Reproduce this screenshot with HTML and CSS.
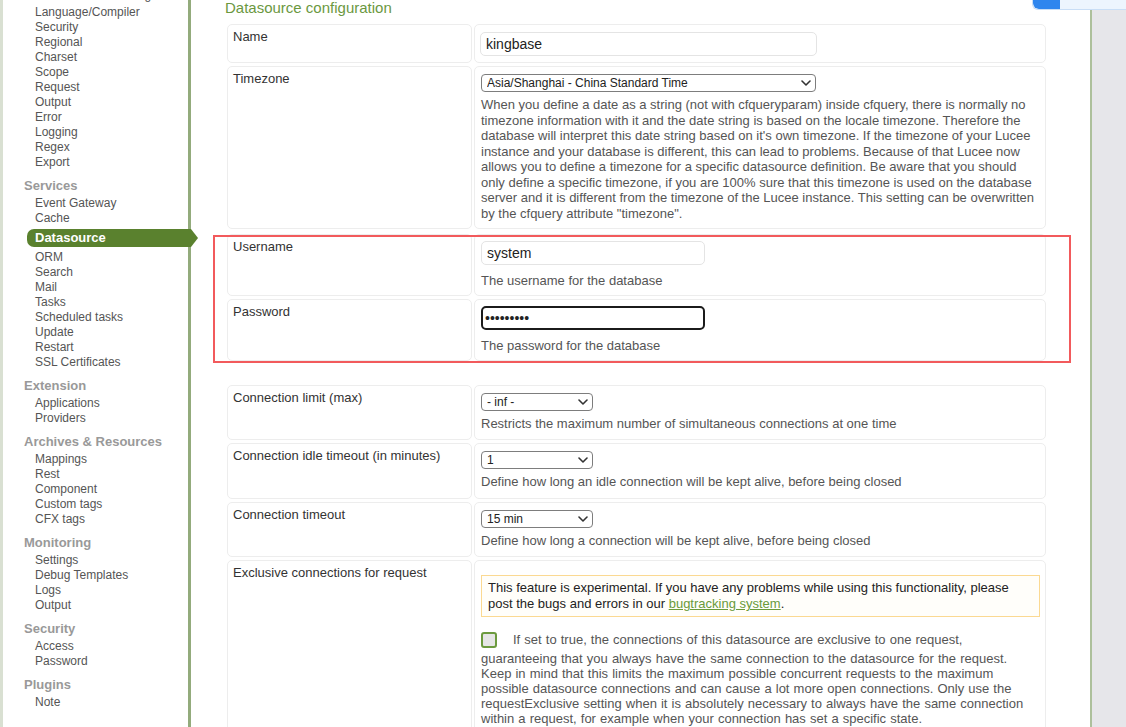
FILE: index.html
```html
<!DOCTYPE html>
<html lang="en">
<head>
<meta charset="utf-8">
<title>Datasource configuration</title>
<link rel="stylesheet" href="styles.css">
</head>
<body>
<div class="page">
  <aside class="sidebar">
    <ul class="nav">
      <li class="item item-cut">Performance/Caching</li>
      <li class="item">Language/Compiler</li>
      <li class="item">Security</li>
      <li class="item">Regional</li>
      <li class="item">Charset</li>
      <li class="item">Scope</li>
      <li class="item">Request</li>
      <li class="item">Output</li>
      <li class="item">Error</li>
      <li class="item">Logging</li>
      <li class="item">Regex</li>
      <li class="item">Export</li>
      <li class="heading">Services</li>
      <li class="item">Event Gateway</li>
      <li class="item">Cache</li>
      <li class="item active">Datasource</li>
      <li class="item">ORM</li>
      <li class="item">Search</li>
      <li class="item">Mail</li>
      <li class="item">Tasks</li>
      <li class="item">Scheduled tasks</li>
      <li class="item">Update</li>
      <li class="item">Restart</li>
      <li class="item">SSL Certificates</li>
      <li class="heading">Extension</li>
      <li class="item">Applications</li>
      <li class="item">Providers</li>
      <li class="heading">Archives &amp; Resources</li>
      <li class="item">Mappings</li>
      <li class="item">Rest</li>
      <li class="item">Component</li>
      <li class="item">Custom tags</li>
      <li class="item">CFX tags</li>
      <li class="heading">Monitoring</li>
      <li class="item">Settings</li>
      <li class="item">Debug Templates</li>
      <li class="item">Logs</li>
      <li class="item">Output</li>
      <li class="heading">Security</li>
      <li class="item">Access</li>
      <li class="item">Password</li>
      <li class="heading">Plugins</li>
      <li class="item">Note</li>
    </ul>
  </aside>

  <main class="main">
    <h2 class="title">Datasource configuration</h2>

    <div class="form">
      <div class="label">Name</div>
      <div class="value value-short"><input class="text text-name" type="text" value="kingbase"></div>

      <div class="label">Timezone</div>
      <div class="value">
        <span class="select-box select-wide">
          <select class="select"><option>Asia/Shanghai - China Standard Time</option></select>
          <svg class="chev" viewBox="0 0 10 6" aria-hidden="true"><path d="M1 1 L5 5 L9 1" fill="none" stroke="#333" stroke-width="1.6" stroke-linecap="round" stroke-linejoin="round"/></svg>
        </span>
        <div class="desc desc-tz">When you define a date as a string (not with cfqueryparam) inside cfquery, there is normally no timezone information with it and the date string is based on the locale timezone. Therefore the database will interpret this date string based on it's own timezone. If the timezone of your Lucee instance and your database is different, this can lead to problems. Because of that Lucee now allows you to define a timezone for a specific datasource definition. Be aware that you should only define a specific timezone, if you are 100% sure that this timezone is used on the database server and it is different from the timezone of the Lucee instance. This setting can be overwritten by the cfquery attribute "timezone".</div>
      </div>
    </div>

    <div class="form form-highlight">
      <div class="label">Username</div>
      <div class="value">
        <input class="text text-user" type="text" value="system">
        <div class="desc desc-input">The username for the database</div>
      </div>

      <div class="label">Password</div>
      <div class="value">
        <input class="text text-user text-pass" type="password" value="kingbase1">
        <div class="desc desc-input">The password for the database</div>
      </div>
    </div>

    <div class="form form-conn">
      <div class="label">Connection limit (max)</div>
      <div class="value">
        <span class="select-box select-small">
          <select class="select"><option>- inf -</option></select>
          <svg class="chev" viewBox="0 0 10 6" aria-hidden="true"><path d="M1 1 L5 5 L9 1" fill="none" stroke="#333" stroke-width="1.6" stroke-linecap="round" stroke-linejoin="round"/></svg>
        </span>
        <div class="desc">Restricts the maximum number of simultaneous connections at one time</div>
      </div>

      <div class="label">Connection idle timeout (in minutes)</div>
      <div class="value">
        <span class="select-box select-small">
          <select class="select"><option>1</option></select>
          <svg class="chev" viewBox="0 0 10 6" aria-hidden="true"><path d="M1 1 L5 5 L9 1" fill="none" stroke="#333" stroke-width="1.6" stroke-linecap="round" stroke-linejoin="round"/></svg>
        </span>
        <div class="desc">Define how long an idle connection will be kept alive, before being closed</div>
      </div>

      <div class="label">Connection timeout</div>
      <div class="value">
        <span class="select-box select-small">
          <select class="select"><option>15 min</option></select>
          <svg class="chev" viewBox="0 0 10 6" aria-hidden="true"><path d="M1 1 L5 5 L9 1" fill="none" stroke="#333" stroke-width="1.6" stroke-linecap="round" stroke-linejoin="round"/></svg>
        </span>
        <div class="desc">Define how long a connection will be kept alive, before being closed</div>
      </div>

      <div class="label">Exclusive connections for request</div>
      <div class="value">
        <div class="warning">This feature is experimental. If you have any problems while using this functionality, please post the bugs and errors in our <a class="link" href="#">bugtracking system</a>.</div>
        <p class="check-text"><input class="checkbox" type="checkbox">If set to true, the connections of this datasource are exclusive to one request, guaranteeing that you always have the same connection to the datasource for the request. Keep in mind that this limits the maximum possible concurrent requests to the maximum possible datasource connections and can cause a lot more open connections. Only use the requestExclusive setting when it is absolutely necessary to always have the same connection within a request, for example when your connection has set a specific state.</p>
      </div>
    </div>
  </main>

  <div class="rail"></div>
  <div class="widget"><span class="widget-thumb"></span></div>
</div>
</body>
</html>
```

FILE: styles.css
```css
* { box-sizing: border-box; }

html, body {
  margin: 0;
  padding: 0;
  background: #fff;
}

body {
  font-family: "Liberation Sans", Arial, sans-serif;
  color: #333;
}

.page {
  position: relative;
  display: flex;
  width: 1126px;
  height: 727px;
  overflow: hidden;
}

/* ---------- sidebar ---------- */
.sidebar {
  flex: 0 0 191px;
  height: 727px;
  border-left: 3px solid #d9e0d2;
  border-right: 3px solid #93ab7c;
  background: #fff;
}

.nav {
  list-style: none;
  margin: -12px 0 0 0;
  padding: 0;
}

.item {
  font-size: 12px;
  line-height: 15px;
  color: #555;
  padding-left: 32px;
  white-space: nowrap;
}

.item-cut {
  margin-bottom: 2px;
}

.heading {
  font-size: 13px;
  font-weight: bold;
  line-height: 15px;
  color: #999;
  padding-left: 21px;
  margin: 8px 0 3px;
  white-space: nowrap;
}

.item.active {
  position: relative;
  margin: 3px -3px 3px 24px;
  padding-left: 8px;
  height: 18px;
  line-height: 18px;
  font-size: 13px;
  font-weight: bold;
  color: #fff;
  background: #5a812e;
  border-radius: 7px 0 0 7px;
}

.item.active::after {
  content: "";
  position: absolute;
  top: 0;
  right: -7px;
  border-top: 9px solid transparent;
  border-bottom: 9px solid transparent;
  border-left: 7px solid #5a812e;
}

/* ---------- main ---------- */
.main {
  flex: 0 0 899px;
  padding: 0 0 0 36px;
  background: #fff;
}

.title {
  margin: -1px 0 8px -2px;
  font-size: 15px;
  line-height: 17px;
  font-weight: normal;
  color: #6b983f;
}

.form {
  display: grid;
  width: 819px;
  grid-template-columns: 245px 572px;
  column-gap: 2px;
  row-gap: 3px;
}

.form-highlight {
  position: relative;
  margin-top: 5px;
}

.form-highlight::after {
  content: "";
  position: absolute;
  left: -14px;
  right: -25px;
  top: 1px;
  bottom: -2px;
  border: 2px solid #f25a5c;
  pointer-events: none;
}

.form-conn {
  margin-top: 24px;
}

.form-conn .value {
  padding-bottom: 8px;
}

.label,
.value {
  border: 1px solid #ededed;
  border-radius: 5px;
  background: #fff;
}

.label {
  padding: 4px 5px;
  font-size: 13px;
  line-height: 15px;
  color: #333;
}

.value {
  padding: 7px 5px 7px 6px;
}

.value-short {
  padding-bottom: 6px;
}

.text {
  display: block;
  height: 24px;
  margin: 0;
  padding: 0 5px;
  border: 1px solid #e4e4e4;
  border-radius: 5px;
  font-family: "Liberation Sans", Arial, sans-serif;
  font-size: 14px;
  color: #222;
  background: #fff;
  outline: none;
}

.text-name { width: 337px; margin-left: -1px; }
.text-user { width: 224px; margin-top: -1px; }

.text-pass {
  border: 2px solid #1b1b1b;
  padding-left: 2px;
  font-size: 14px;
}

.select-box {
  position: relative;
  display: block;
  height: 18px;
}

.select-wide { width: 335px; }
.select-small { width: 112px; }

.select {
  -webkit-appearance: none;
  appearance: none;
  display: block;
  width: 100%;
  height: 18px;
  margin: 0;
  padding: 0 18px 0 5px;
  border: 1px solid #7d7d7d;
  border-radius: 4px;
  background: #fff;
  font-family: "Liberation Sans", Arial, sans-serif;
  font-size: 12px;
  line-height: 16px;
  color: #222;
}

.chev {
  position: absolute;
  right: 5px;
  top: 6px;
  width: 10px;
  height: 6px;
  pointer-events: none;
}

.desc {
  margin-top: 5px;
  font-size: 13px;
  line-height: 15.4px;
  color: #555;
}

.desc-tz { line-height: 15.5px; }
.desc-input { margin-top: 8px; line-height: 15px; }

.warning {
  margin-top: 7px;
  padding: 4px 6px;
  border: 1px solid #fbd992;
  background: #fffefa;
  font-size: 13px;
  line-height: 16px;
  color: #222;
}

.link {
  color: #6a9a3a;
  text-decoration: underline;
}

.check-text {
  margin: 13px 0 0;
  font-size: 13px;
  line-height: 15px;
  word-spacing: 0.5px;
  color: #555;
}

.checkbox {
  -webkit-appearance: none;
  appearance: none;
  width: 16px;
  height: 16px;
  margin: 2px 16px 3px 0;
  vertical-align: middle;
  border: 2px solid #6c9a3f;
  border-radius: 3px;
  background: #e6e6e6;
}

/* ---------- right rail ---------- */
.rail {
  flex: 1 1 auto;
  border-left: 2px solid #adc09c;
  background: #e6e6ea;
}

.widget {
  position: absolute;
  top: 0;
  right: 0;
  width: 94px;
  height: 10px;
  border: 1px solid #c9def6;
  border-top: none;
  border-right: none;
  border-radius: 0 0 0 6px;
  background: #edf5fe;
  overflow: hidden;
}

.widget-thumb {
  display: block;
  width: 27px;
  height: 100%;
  border-radius: 0 0 0 6px;
  background: #2f86ee;
}
```
